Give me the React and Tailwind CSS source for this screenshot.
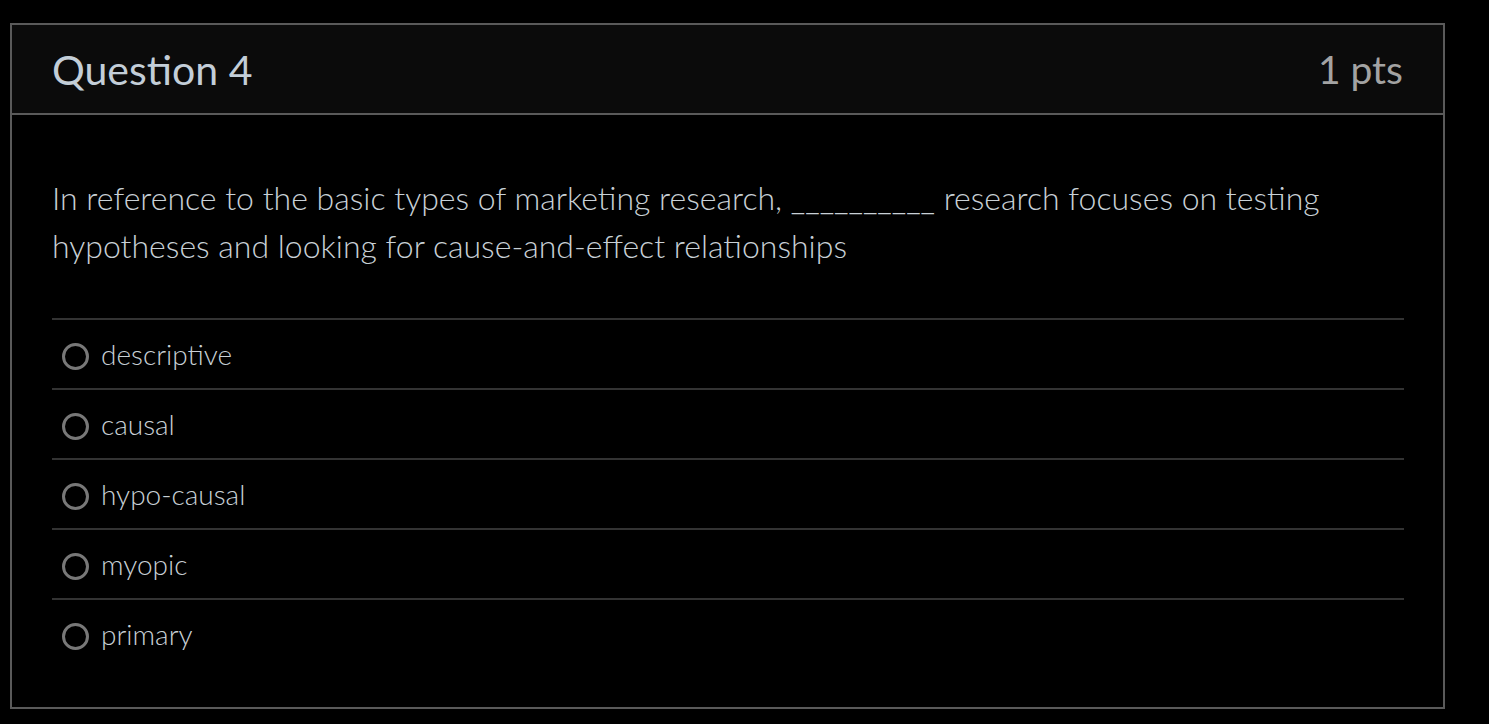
const options = ["descriptive", "causal", "hypo-causal", "myopic", "primary"];

export default function App() {
  return (
    <div className="min-h-screen w-full bg-black pt-[23px] pl-[10px]" style={{ fontFamily: "Lato, 'Open Sans', sans-serif" }}>
      <div className="w-[1435px] h-[686px] border-2 border-[#5a5a5a] bg-black">
        <div className="h-[90px] flex items-center justify-between px-[40px] bg-[#0b0b0b] border-b-2 border-[#5a5a5a]">
          <h2 className="text-[41px] leading-none text-[#c3ced8] font-normal">Question 4</h2>
          <span className="text-[39px] leading-none text-[#a3a3a3] font-normal">1 pts</span>
        </div>
        <div className="px-[40px] pt-[59px]">
          <p className="text-[32px] leading-[48px] font-light text-[#c8d0d6] pr-[40px]">
            In reference to the basic types of marketing research, __________ research focuses on testing hypotheses and looking for cause-and-effect relationships
          </p>
          <div className="mt-[48px] w-[1352px]">
            {options.map((opt) => (
              <div
                key={opt}
                className="h-[70px] flex items-center gap-[12px] pl-[10px] border-t-2 border-[#333333]"
              >
                <div className="w-[27px] h-[27px] rounded-full border-[3px] border-[#787878] mt-[4px]" />
                <span className="text-[28px] font-light text-[#c8d0d6]">{opt}</span>
              </div>
            ))}
          </div>
        </div>
      </div>
    </div>
  );
}
